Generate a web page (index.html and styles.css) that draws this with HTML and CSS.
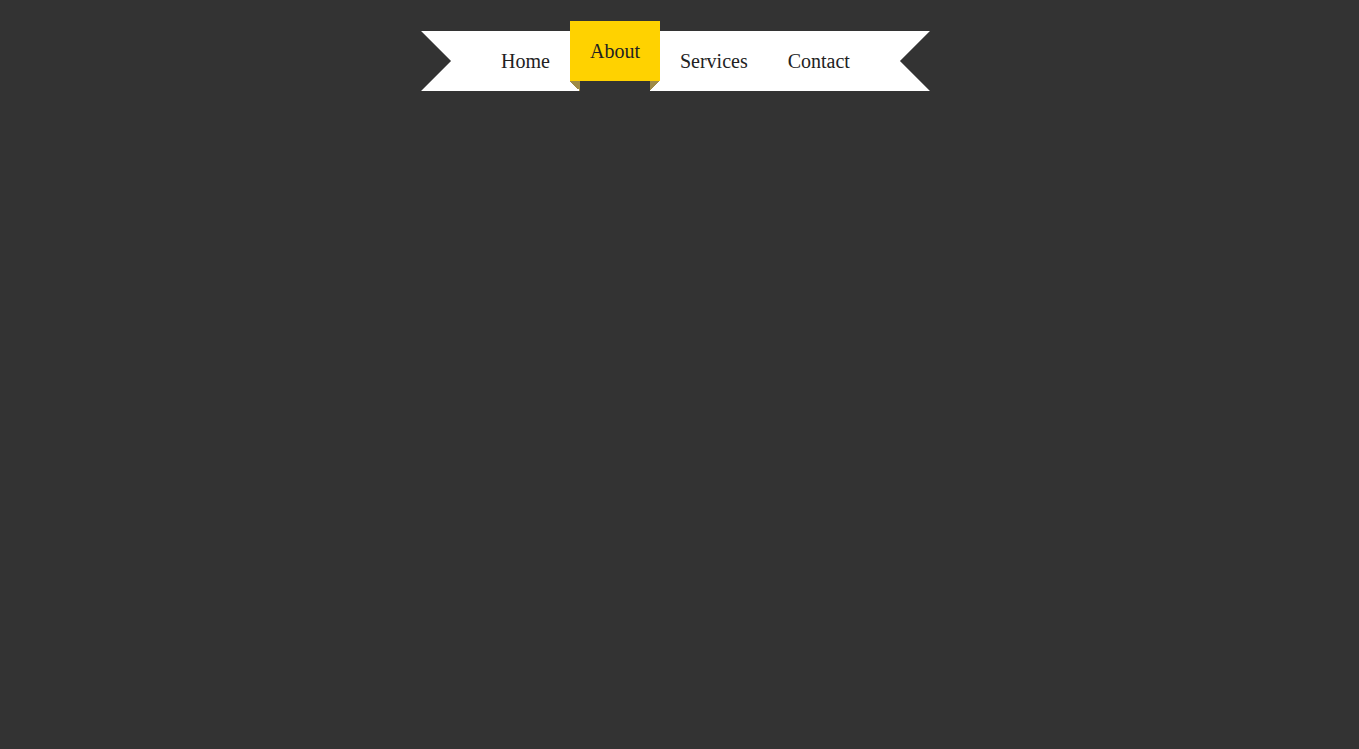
FILE: index.html
```html
<!DOCTYPE html>
<html lang="en">
<head>
<meta charset="utf-8">
<title>Ribbon menu</title>
<link rel="stylesheet" href="styles.css">
</head>
<body>
<nav class="nav">
  <ul class="ribbon">
    <li class="item"><a href="#">Home</a></li>
    <li class="item active"><a href="#">About</a></li>
    <li class="item"><a href="#">Services</a></li>
    <li class="item"><a href="#">Contact</a></li>
  </ul>
</nav>
</body>
</html>
```

FILE: styles.css
```css
html, body {
  margin: 0;
  padding: 0;
  background: #333333;
  height: 100%;
}

.nav {
  display: flex;
  justify-content: center;
  padding: 31px 8px 0 0;
}

.ribbon {
  position: relative;
  display: flex;
  margin: 0;
  padding: 0 60px;
  list-style: none;
  height: 60px;
  z-index: 0;
}

.ribbon::before {
  content: "";
  position: absolute;
  inset: 0;
  background: #ffffff;
  clip-path: polygon(0 0, 100% 0, calc(100% - 30px) 50%, 100% 100%, 0 100%, 30px 50%);
  z-index: -1;
}

.item {
  position: relative;
  height: 60px;
}

.item a {
  display: block;
  padding: 0 20px;
  line-height: 60px;
  font-family: "Liberation Serif", "Times New Roman", serif;
  font-size: 20px;
  color: #222222;
  text-decoration: none;
}

.item.active {
  top: -10px;
  background: #ffd200;
}

.item.active::after {
  content: "";
  position: absolute;
  top: 60px;
  left: 0;
  right: 0;
  height: 10px;
  background:
    linear-gradient(to top right, transparent 50%, #9e8a48 50%) left top / 10px 10px no-repeat,
    linear-gradient(to top left, transparent 50%, #9e8a48 50%) right top / 10px 10px no-repeat,
    linear-gradient(#333333, #333333) center top / calc(100% - 20px) 100% no-repeat;
}
```
